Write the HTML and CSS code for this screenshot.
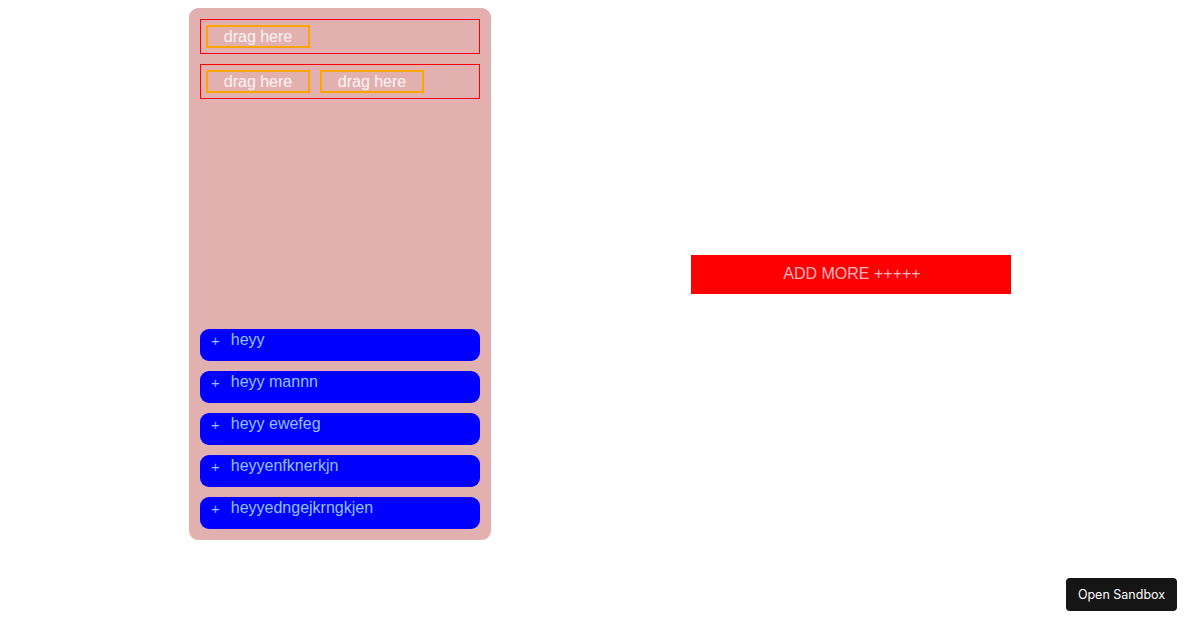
FILE: index.html
```html
<!DOCTYPE html>
<html>
<head>
<meta charset="utf-8">
<link rel="stylesheet" href="styles.css">
</head>
<body>
<div class="stage">
  <div class="panel">
    <div class="rows">
      <div class="row">
        <div class="drag">drag here</div>
      </div>
      <div class="row">
        <div class="drag">drag here</div>
        <div class="drag">drag here</div>
      </div>
    </div>
    <div class="list">
      <div class="item"><span class="plus">+</span>heyy</div>
      <div class="item"><span class="plus">+</span>heyy mannn</div>
      <div class="item"><span class="plus">+</span>heyy ewefeg</div>
      <div class="item"><span class="plus">+</span>heyyenfknerkjn</div>
      <div class="item"><span class="plus">+</span>heyyedngejkrngkjen</div>
    </div>
  </div>
  <button class="add">ADD MORE +++++</button>
</div>
<a class="sandbox">Open Sandbox</a>
</body>
</html>
```
FILE: styles.css
```css
* { box-sizing: border-box; }
html, body { background: #fff; }
body {
  margin: 8px;
  font-family: "Liberation Sans", Arial, sans-serif;
  font-size: 16px;
}
.stage {
  display: flex;
  justify-content: center;
  align-items: center;
  gap: 200px;
}
.panel {
  width: 302px;
  height: 532px;
  background: #e3b0b0;
  border-radius: 9px;
  padding: 11px;
  display: flex;
  flex-direction: column;
  justify-content: space-between;
}
.rows {
  display: flex;
  flex-direction: column;
  gap: 10px;
}
.row {
  border: 1px solid #ff0000;
  padding: 5px;
  display: flex;
  gap: 10px;
  height: 35px;
}
.drag {
  width: 104px;
  height: 23px;
  border: 2px solid #ffa500;
  color: #fff4f4;
  text-align: center;
  line-height: 19px;
  font-size: 16px;
}
.list {
  display: flex;
  flex-direction: column;
  gap: 10px;
}
.item {
  height: 32px;
  background: #0000ff;
  border-radius: 9px;
  color: #94c0ff;
  padding: 2px 11px 0;
  line-height: 18px;
  font-size: 16px;
}
.plus {
  display: inline-block;
  margin-right: 11px;
  font-size: 15px;
  position: relative;
  top: 1px;
}
.add {
  width: 320px;
  height: 39px;
  border: none;
  background: #ff0000;
  color: #ffb6c1;
  font-family: "Liberation Sans", Arial, sans-serif;
  font-size: 16px;
  padding: 0 0 0 2px;
}
.sandbox {
  position: fixed;
  right: 23px;
  bottom: 19px;
  width: 111px;
  height: 33px;
  background: #151515;
  color: #fff;
  border-radius: 4px;
  font-family: Inter, "Liberation Sans", sans-serif;
  font-size: 12.5px;
  display: flex;
  align-items: center;
  justify-content: center;
}
```
